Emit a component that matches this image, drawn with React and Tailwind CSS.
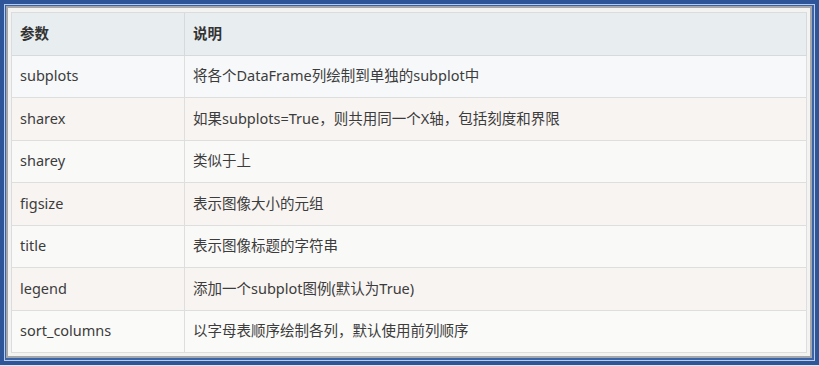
import React from "react";

const rows = [
  ["subplots", "将各个DataFrame列绘制到单独的subplot中", "bg-[#f6f8f9]"],
  ["sharex", "如果subplots=True，则共用同一个X轴，包括刻度和界限", "bg-[#f8f4f2]"],
  ["sharey", "类似于上", "bg-[#f9f9f8]"],
  ["figsize", "表示图像大小的元组", "bg-[#f8f4f2]"],
  ["title", "表示图像标题的字符串", "bg-[#f9f9f8]"],
  ["legend", "添加一个subplot图例(默认为True)", "bg-[#f8f4f2]"],
  ["sort_columns", "以字母表顺序绘制各列，默认使用前列顺序", "bg-[#fafaf8]"],
];

export default function App() {
  return (
    <div
      className="w-[819px] h-[366px] bg-[#dfe6ef] overflow-hidden"
      style={{ fontFamily: '"Noto Sans", "Noto Sans CJK SC", sans-serif' }}
    >
      <div className="w-[819px] h-[365px] bg-[#2d5597] pt-[4px] pl-[4px] pr-[4px] pb-[4px]">
        <div className="w-full h-full bg-[#b9cbe6] p-[1px]">
          <div className="w-full h-full bg-[#3b63a5] pt-[1px] pl-[1px] pr-[2px] pb-[2px]">
            <div className="w-full h-full bg-[#a3a6ab] pt-[2px] pl-[2px] pr-[2px] pb-[2px]">
              <div className="w-full h-full bg-[#f3f3f2] pt-[4px] pl-[3px] pr-[3px] pb-[0px]">
                <div className="grid grid-cols-[173px_1fr] grid-rows-[repeat(8,1fr)] h-[341px] border-t border-l border-[#dcdcdc] text-[14.5px] text-[#3c3c3c]">
                  <div className="bg-[#e8eef0] border-r border-b border-[#d6dadc] flex items-center pl-[8px] font-bold text-[#333]">
                    参数
                  </div>
                  <div className="bg-[#e8eef0] border-r border-b border-[#d6dadc] flex items-center pl-[8px] font-bold text-[#333]">
                    说明
                  </div>
                  {rows.map(([a, b, bg]) => (
                    <React.Fragment key={a}>
                      <div className={`${bg} border-r border-b border-[#dedede] flex items-center pl-[8px]`}>{a}</div>
                      <div className={`${bg} border-r border-b border-[#dedede] flex items-center pl-[8px]`}>{b}</div>
                    </React.Fragment>
                  ))}
                </div>
              </div>
            </div>
          </div>
        </div>
      </div>
    </div>
  );
}
